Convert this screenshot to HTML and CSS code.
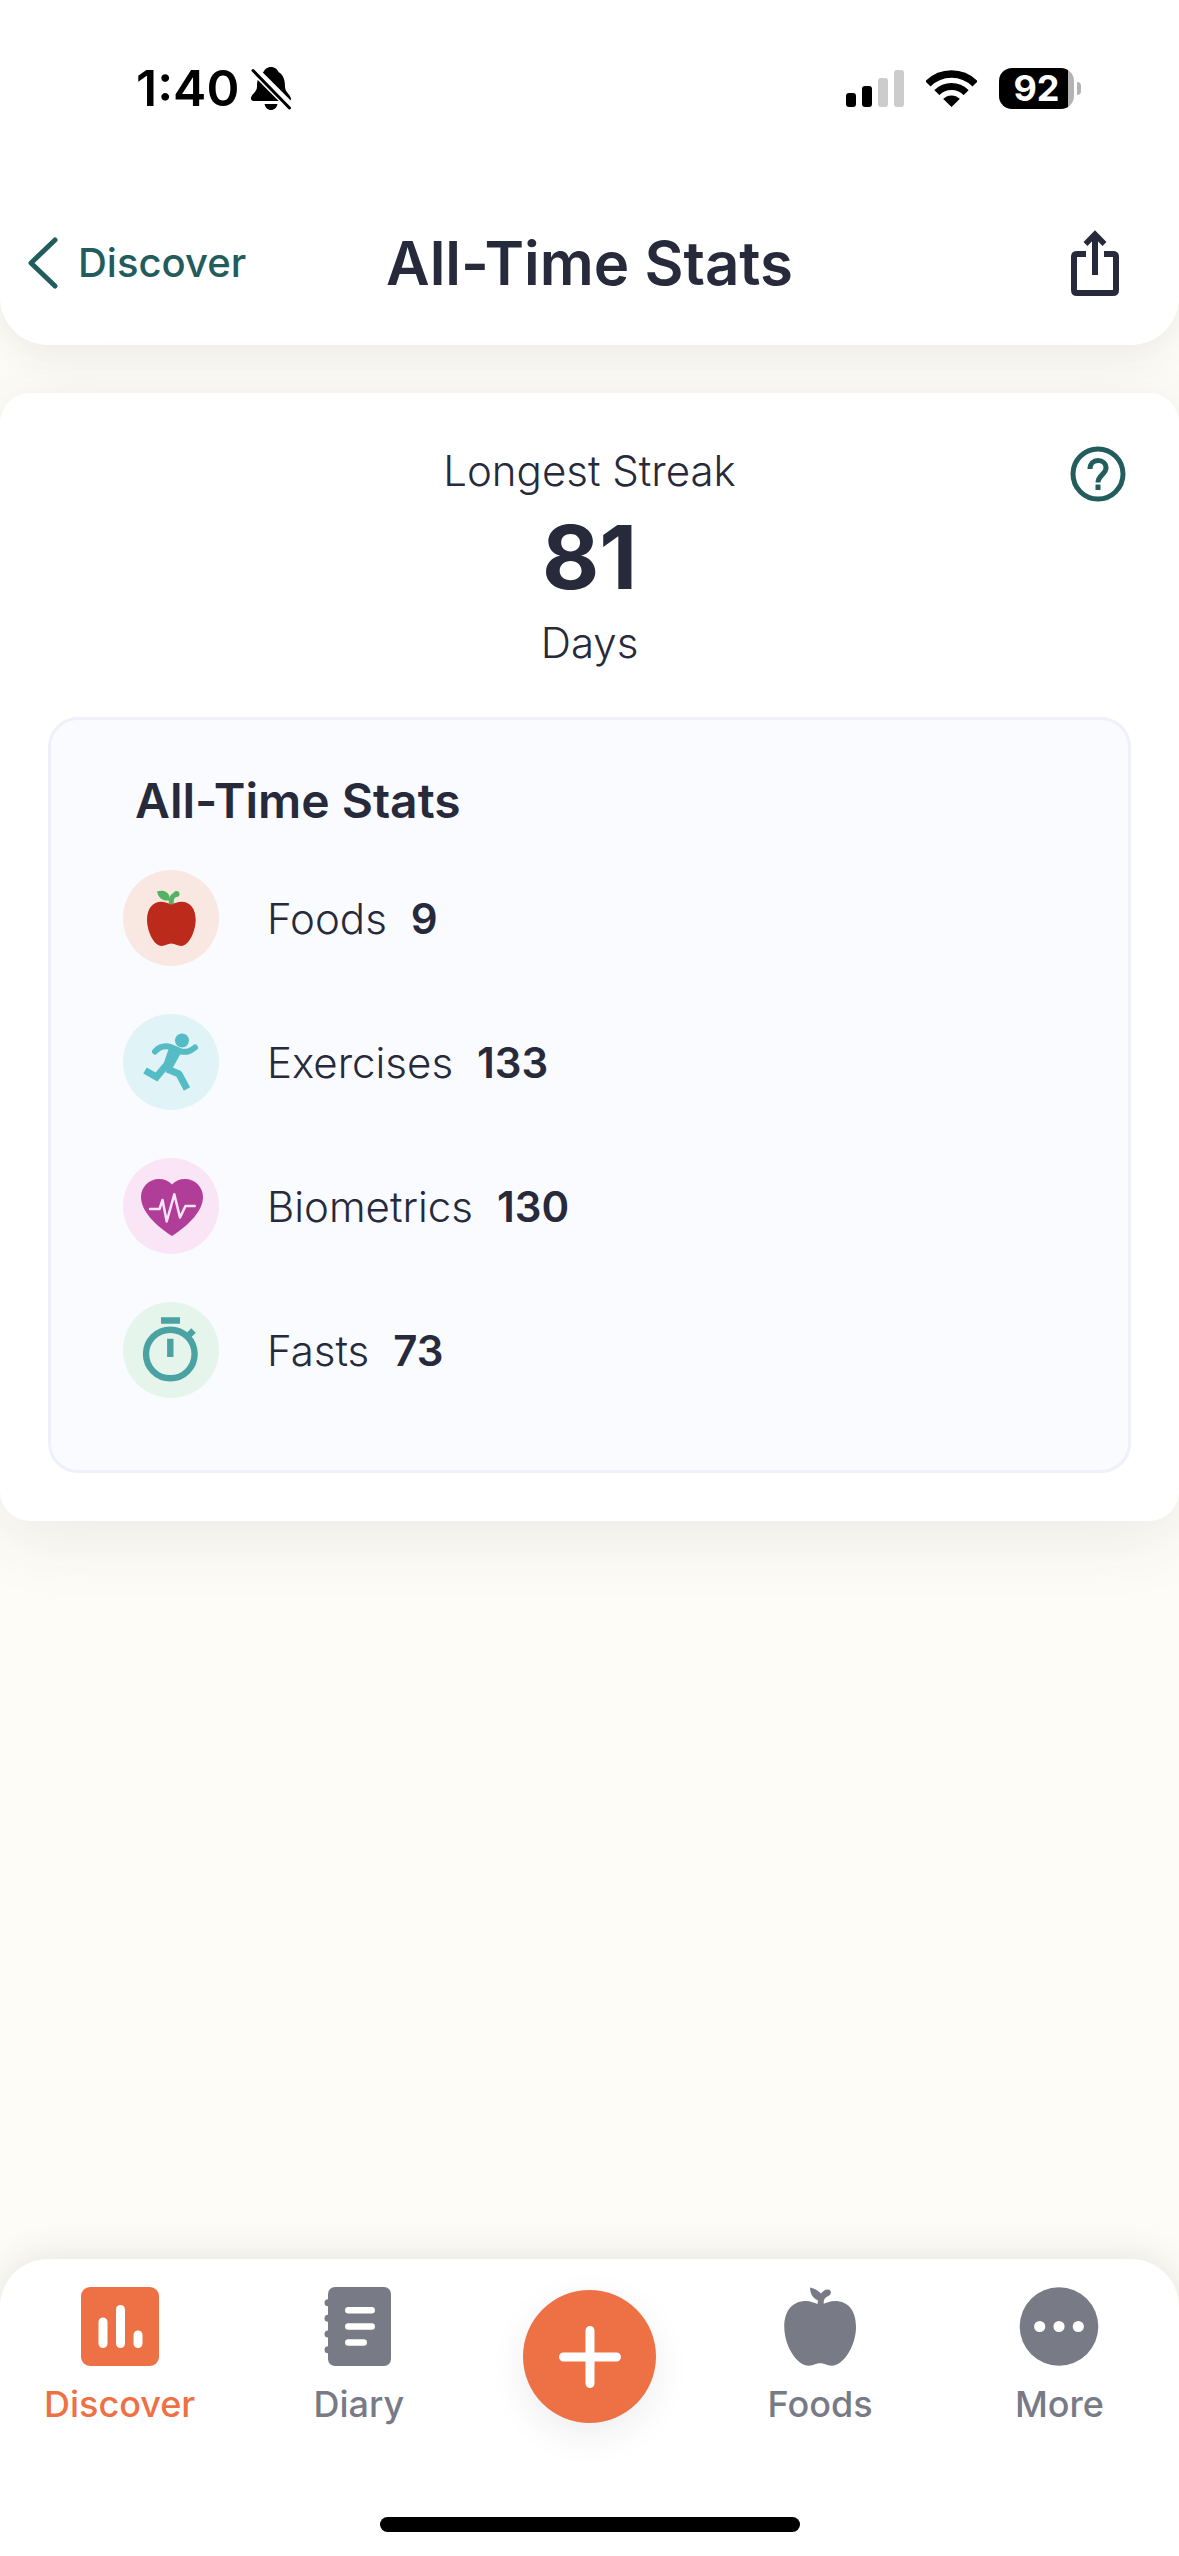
FILE: index.html
```
<!DOCTYPE html>
<html lang="en">
<head>
  <meta charset="UTF-8">
  <meta name="viewport" content="width=device-width, initial-scale=1">
  <title>All-Time Stats</title>
  <link rel="stylesheet" href="styles.css">
</head>

<body>
  <header class="header">
    <div class="status-bar">
      <div class="status-left">
        <span class="clock">1:40</span>
        <svg viewBox="0 0 40 43" width="40" height="43" aria-hidden="true">
          <path d="M20 0c4 0 6.500 2.500 7.500 5C33 8 34 14 34 20c0 5 6 8 6 12 0 1.500-1 2-2.500 2h-35C1 34 0 33 0 31.500 0 27 6 25 6 20 6 14 7 8 12.500 5 13.500 2.500 16 0 20 0z"/>
          <path d="M13.500 37h13c-.8 3.800-3.200 6-6.500 6s-5.700-2.200-6.500-6z"/>
          <path d="M0 0L43 43" stroke="#fff" stroke-width="9"/>
          <path d="M2 3.500L38.500 41" stroke="#000" stroke-width="3" stroke-linecap="round"/>
        </svg>
      </div>
      <div class="status-right">
        <svg viewBox="0 0 58 37" width="58" height="37" aria-hidden="true">
          <rect x="0" y="23" width="10" height="14" rx="3"/>
          <rect x="16" y="16" width="10" height="21" rx="3"/>
          <rect x="32" y="8" width="10" height="29" rx="3" fill="#ccc"/>
          <rect x="48" y="0" width="10" height="37" rx="3" fill="#ccc"/>
        </svg>
        <svg viewBox="0 0 51 37" width="51" height="37" aria-hidden="true">
          <clipPath id="wifi"><path d="M25.500 37L-4 8V-10H55V8z"/></clipPath>
          <g clip-path="url(#wifi)">
            <circle cx="25.500" cy="37" r="33" fill="none" stroke="#000" stroke-width="7.500"/>
            <circle cx="25.500" cy="37" r="20.500" fill="none" stroke="#000" stroke-width="7"/>
            <circle cx="25.500" cy="37" r="11.500"/>
          </g>
        </svg>
        <div class="battery"><span class="battery-level">92</span></div>
      </div>
    </div>
    <nav class="nav">
      <a class="back" href="#">
        <svg viewBox="0 0 30 52" width="30" height="52" aria-hidden="true">
          <path d="M27 3L3 26l24 23" fill="none" stroke="currentColor" stroke-width="5" stroke-linecap="round" stroke-linejoin="round"/>
        </svg>
        Discover
      </a>
      <h1 class="nav-title">All-Time Stats</h1>
      <button class="icon-button" type="button" aria-label="Share">
        <svg viewBox="0 0 48 66" width="48" height="66" fill="none" stroke="currentColor" stroke-width="6">
          <path d="M15 24H6q-3 0-3 3v33q0 3 3 3h36q3 0 3-3V27q0-3-3-3h-9M24 45V5"/>
          <path d="M14.500 14L24 4.300 33.500 14" stroke-width="5.500"/>
        </svg>
      </button>
    </nav>
  </header>

  <main class="card">
    <section class="streak">
      <div class="streak-text">
        <div class="streak-label">Longest Streak</div>
        <div class="streak-value">81</div>
        <div class="streak-label">Days</div>
      </div>
      <button class="icon-button help" type="button" aria-label="Help">
        <svg viewBox="0 0 56 56" width="56" height="56" fill="none" stroke="currentColor" stroke-width="5">
          <circle cx="28" cy="28" r="25"/>
          <path d="M20 23c0-5.500 3.500-8.500 8-8.500s8 3 8 7.500c0 6-8 7.500-8 14.500"/>
          <path d="M28 38.500v5.500"/>
        </svg>
      </button>
    </section>

    <section class="panel">
      <h2 class="panel-title">All-Time Stats</h2>
      <ul class="stats">
        <li class="stat">
          <svg class="stat-icon foods" viewBox="0 0 96 96" aria-hidden="true">
            <path fill="#bc2a1c" d="M48.300 34.300C45 33.500 42 31.700 38 31.700c-8 0-14 6.300-14 18.300 0 11 7 26 14.500 26 4 0 6-2.400 9.800-2.400s6 2.400 10 2.400c7.500 0 14.400-15 14.400-26 0-12-6-18.300-14-18.300-4 0-7 1.800-10.400 2.600z"/>
            <path fill="#54b263" d="M34 21.500c5-1.500 11-.8 12.500 5.500l-.5 3.500c-7 .5-10.500-2.500-12-9z"/>
            <path fill="none" stroke="#54b263" stroke-width="5" d="M48.300 34.300v-3.500c0-3 1.500-5 5-6.500"/>
            <circle cx="53.500" cy="24" r="3" fill="#54b263"/>
          </svg>
          <span class="stat-name">Foods</span>
          <span class="stat-value">9</span>
        </li>
        <li class="stat">
          <svg class="stat-icon exercises" viewBox="0 0 96 96" aria-hidden="true">
            <g fill="none" stroke="#55bbc4" stroke-width="6" stroke-linecap="round" stroke-linejoin="round">
              <path d="M32 37.500c4-4.500 8-5.500 12-5.200 6 .4 9 3.700 14 5.200 6 1 9 0 14-4"/>
              <path stroke-width="7" stroke-linecap="butt" stroke-linejoin="miter" d="M43 51.500L33.500 63 22 56.500"/>
              <path stroke-width="7" stroke-linecap="butt" d="M44 55l12 5 8 15"/>
            </g>
            <path fill="#55bbc4" d="M46 34l12 5-9.500 17L39 54z"/>
            <circle cx="59" cy="26.500" r="7" fill="#55bbc4"/>
          </svg>
          <span class="stat-name">Exercises</span>
          <span class="stat-value">133</span>
        </li>
        <li class="stat">
          <svg class="stat-icon biometrics" viewBox="0 0 96 96" aria-hidden="true">
            <path fill="#b03e98" d="M49 26.500C46 23 41.500 21 36 21c-10 0-18 8-18 18 0 14 14 28 31 39 17-11 31-25 31-39 0-10-8-18-18-18-5.500 0-10 2-13 5.500z"/>
            <path fill="none" stroke="#f9e5f5" stroke-width="2.500" stroke-linejoin="round" stroke-linecap="round" d="M27 51h9.500l3-9 4.200 21.500 7.600-27.200L57 59.500 62.500 48h9.200"/>
          </svg>
          <span class="stat-name">Biometrics</span>
          <span class="stat-value">130</span>
        </li>
        <li class="stat">
          <svg class="stat-icon fasts" viewBox="0 0 96 96" aria-hidden="true">
            <g fill="none" stroke="#4aa3a2" stroke-width="6.400">
              <circle cx="47.300" cy="52" r="24.300"/>
              <path d="M38 18.500h19M47.300 36.700V55M64.500 34.500l6-6"/>
            </g>
          </svg>
          <span class="stat-name">Fasts</span>
          <span class="stat-value">73</span>
        </li>
      </ul>
    </section>
  </main>

  <footer class="footer">
    <nav class="tabs">
      <a class="tab active" href="#">
        <svg viewBox="0 0 80 80" width="80" height="80" aria-hidden="true">
          <rect x="1" width="78" height="79" rx="9" fill="currentColor"/>
          <g fill="#fff">
            <rect x="18.500" y="30.500" width="9" height="30.500" rx="4.500"/>
            <rect x="36" y="18" width="9" height="43" rx="4.500"/>
            <rect x="53.500" y="43.500" width="9" height="17.500" rx="4.500"/>
          </g>
        </svg>
        Discover
      </a>
      <a class="tab" href="#">
        <svg viewBox="0 0 80 80" width="80" height="80" aria-hidden="true">
          <g fill="currentColor">
            <rect x="9" width="63" height="79" rx="7"/>
            <circle cx="9" cy="15.700" r="3.500"/>
            <circle cx="9" cy="31.300" r="3.500"/>
            <circle cx="9" cy="47" r="3.500"/>
            <circle cx="9" cy="62.700" r="3.500"/>
          </g>
          <path d="M29.300 23.300h23.400M29.300 39.500h23.400M29.300 55.500h15.400" stroke="#fff" stroke-width="6.500" stroke-linecap="round"/>
        </svg>
        Diary
      </a>
      <button class="add" type="button" aria-label="Add">
        <svg viewBox="0 0 62 62" width="62" height="62">
          <path d="M31 4.500v53M4.500 31h53" stroke="currentColor" stroke-width="9" stroke-linecap="round"/>
        </svg>
      </button>
      <a class="tab" href="#">
        <svg viewBox="0 0 80 80" width="80" height="80" aria-hidden="true">
          <path fill="currentColor" d="M37.500 17C34 16 31 14 25.800 14 14 14 4.300 22 4.300 40c0 18 12 38.700 24.500 38.700 4.500 0 6.500-2.400 11.400-2.400s6.900 2.400 11.400 2.400C64 78.700 76 58 76 40c0-18-9.200-26-21-26-5 0-7.500 1.700-11.300 2.700-.4-4 1.300-6.500 4.600-7.700 4-2 3-6.500-.3-6.500-3.500 0-5 2-7 4C38 3.500 35 1.500 30 .5c.3 6.500 2.500 10.500 8 13z"/>
        </svg>
        Foods
      </a>
      <a class="tab" href="#">
        <svg viewBox="0 0 80 80" width="80" height="80" aria-hidden="true">
          <circle cx="40" cy="39.500" r="39.300" fill="currentColor"/>
          <g fill="#fff">
            <circle cx="20.700" cy="39.500" r="5.600"/>
            <circle cx="40" cy="39.500" r="5.600"/>
            <circle cx="59.300" cy="39.500" r="5.600"/>
          </g>
        </svg>
        More
      </a>
    </nav>
    <div class="home-indicator"></div>
  </footer>
</body>
</html>
```

FILE: styles.css
```
*,
*::before,
*::after {
  box-sizing: border-box;
}
body {
  display: flex;
  flex-direction: column;
  min-height: 100vh;
  margin: 0;
  font-family: Inter, "Liberation Sans", sans-serif;
  color: #272a3b;
  background: #fefcf7;
}
h1, h2, ul {
  margin: 0;
  padding: 0;
}
ul {
  list-style: none;
}
a {
  color: inherit;
  text-decoration: none;
}
button {
  padding: 0;
  border: 0;
  font: inherit;
  color: inherit;
  background: none;
  cursor: pointer;
}
svg {
  display: block;
  flex: none;
}

/* header */
.header {
  border-radius: 0 0 48px 48px;
  background: #fff;
  box-shadow: 0 6px 36px rgba(60, 60, 40, .1);
}
.status-bar {
  display: flex;
  align-items: center;
  justify-content: space-between;
  height: 176px;
  padding: 0 105px 0 136px;
  color: #000;
}
.status-left {
  display: flex;
  align-items: center;
  gap: 12px;
}
.clock {
  font-size: 50px;
  font-weight: 600;
}
.status-right {
  display: flex;
  align-items: center;
  gap: 22px;
}
.battery {
  position: relative;
  width: 75px;
  height: 41px;
  border-radius: 13px;
  font-size: 36px;
  font-weight: 700;
  line-height: 41px;
  text-align: center;
  color: #fff;
  background: linear-gradient(to right, #000 69px, #b3b3b3 69px);
}
.battery::after {
  content: '';
  position: absolute;
  top: 14px;
  right: -7px;
  width: 4px;
  height: 13px;
  border-radius: 0 4px 4px 0;
  background: #b3b3b3;
}
.nav {
  display: grid;
  grid-template-columns: 1fr auto 1fr;
  align-items: center;
  height: 169px;
  padding: 4px 60px 0 28px;
}
.back {
  display: flex;
  align-items: center;
  gap: 20px;
  font-size: 40px;
  font-weight: 500;
  color: #235c5c;
}
.nav-title {
  margin-left: 32px;
  font-size: 60px;
  font-weight: 600;
}
.icon-button {
  justify-self: end;
}

/* stats card */
.card {
  margin-top: 48px;
  padding: 48px;
  border-radius: 30px;
  background: #fff;
  box-shadow: 0 12px 72px rgba(60, 60, 40, .1);
}
.streak {
  display: grid;
  grid-template-columns: 1fr auto 1fr;
}
.streak-text {
  grid-column: 2;
  text-align: center;
}
.streak-label {
  font-size: 42px;
  font-weight: 300;
  line-height: 60px;
}
.streak-value {
  font-size: 88px;
  font-weight: 700;
  line-height: 112px;
}
.help {
  align-self: start;
  margin: 5px 5px 0 0;
  color: #235c5c;
}
.panel {
  margin-top: 44px;
  padding: 51px 72px 48px;
  border: 3px solid #f0f0fa;
  border-radius: 30px;
  background: #fafbff;
}
.panel-title {
  margin-bottom: 15px;
  padding-left: 12px;
  font-size: 48px;
  font-weight: 600;
  line-height: 60px;
}
.stat {
  display: flex;
  align-items: center;
  height: 144px;
  font-size: 42px;
}
.stat-icon {
  width: 96px;
  height: 96px;
  margin-right: 48px;
  border-radius: 50%;
}
.stat-icon.foods {
  background: #f9e8e1;
}
.stat-icon.exercises {
  background: #e0f3f7;
}
.stat-icon.biometrics {
  background: #f9e5f5;
}
.stat-icon.fasts {
  background: #e6f5eb;
}
.stat-name {
  margin-right: 24px;
  font-weight: 300;
}
.stat-value {
  font-weight: 600;
}

/* tab bar */
.footer {
  margin-top: auto;
  border-radius: 48px 48px 0 0;
  background: #fff;
  box-shadow: 0 -3px 36px rgba(60, 60, 40, .12);
}
.tabs {
  display: grid;
  grid-template-columns: 1fr 1fr 222px 1fr 1fr;
  justify-items: center;
  height: 258px;
  padding-top: 28px;
}
.tab {
  display: flex;
  flex-direction: column;
  align-items: center;
  gap: 13px;
  font-size: 36px;
  font-weight: 500;
  line-height: 48px;
  color: #787a86;
}
.tab.active {
  color: #ee7145;
}
.add {
  display: flex;
  align-items: center;
  justify-content: center;
  width: 133px;
  height: 133px;
  margin-top: 3px;
  border-radius: 50%;
  color: #fff;
  background: #ee7145;
  box-shadow: 0 12px 36px rgba(40, 40, 40, .08);
}
.home-indicator {
  width: 420px;
  height: 15px;
  margin: 0 auto 24px;
  border-radius: 8px;
  background: #000;
}
```
